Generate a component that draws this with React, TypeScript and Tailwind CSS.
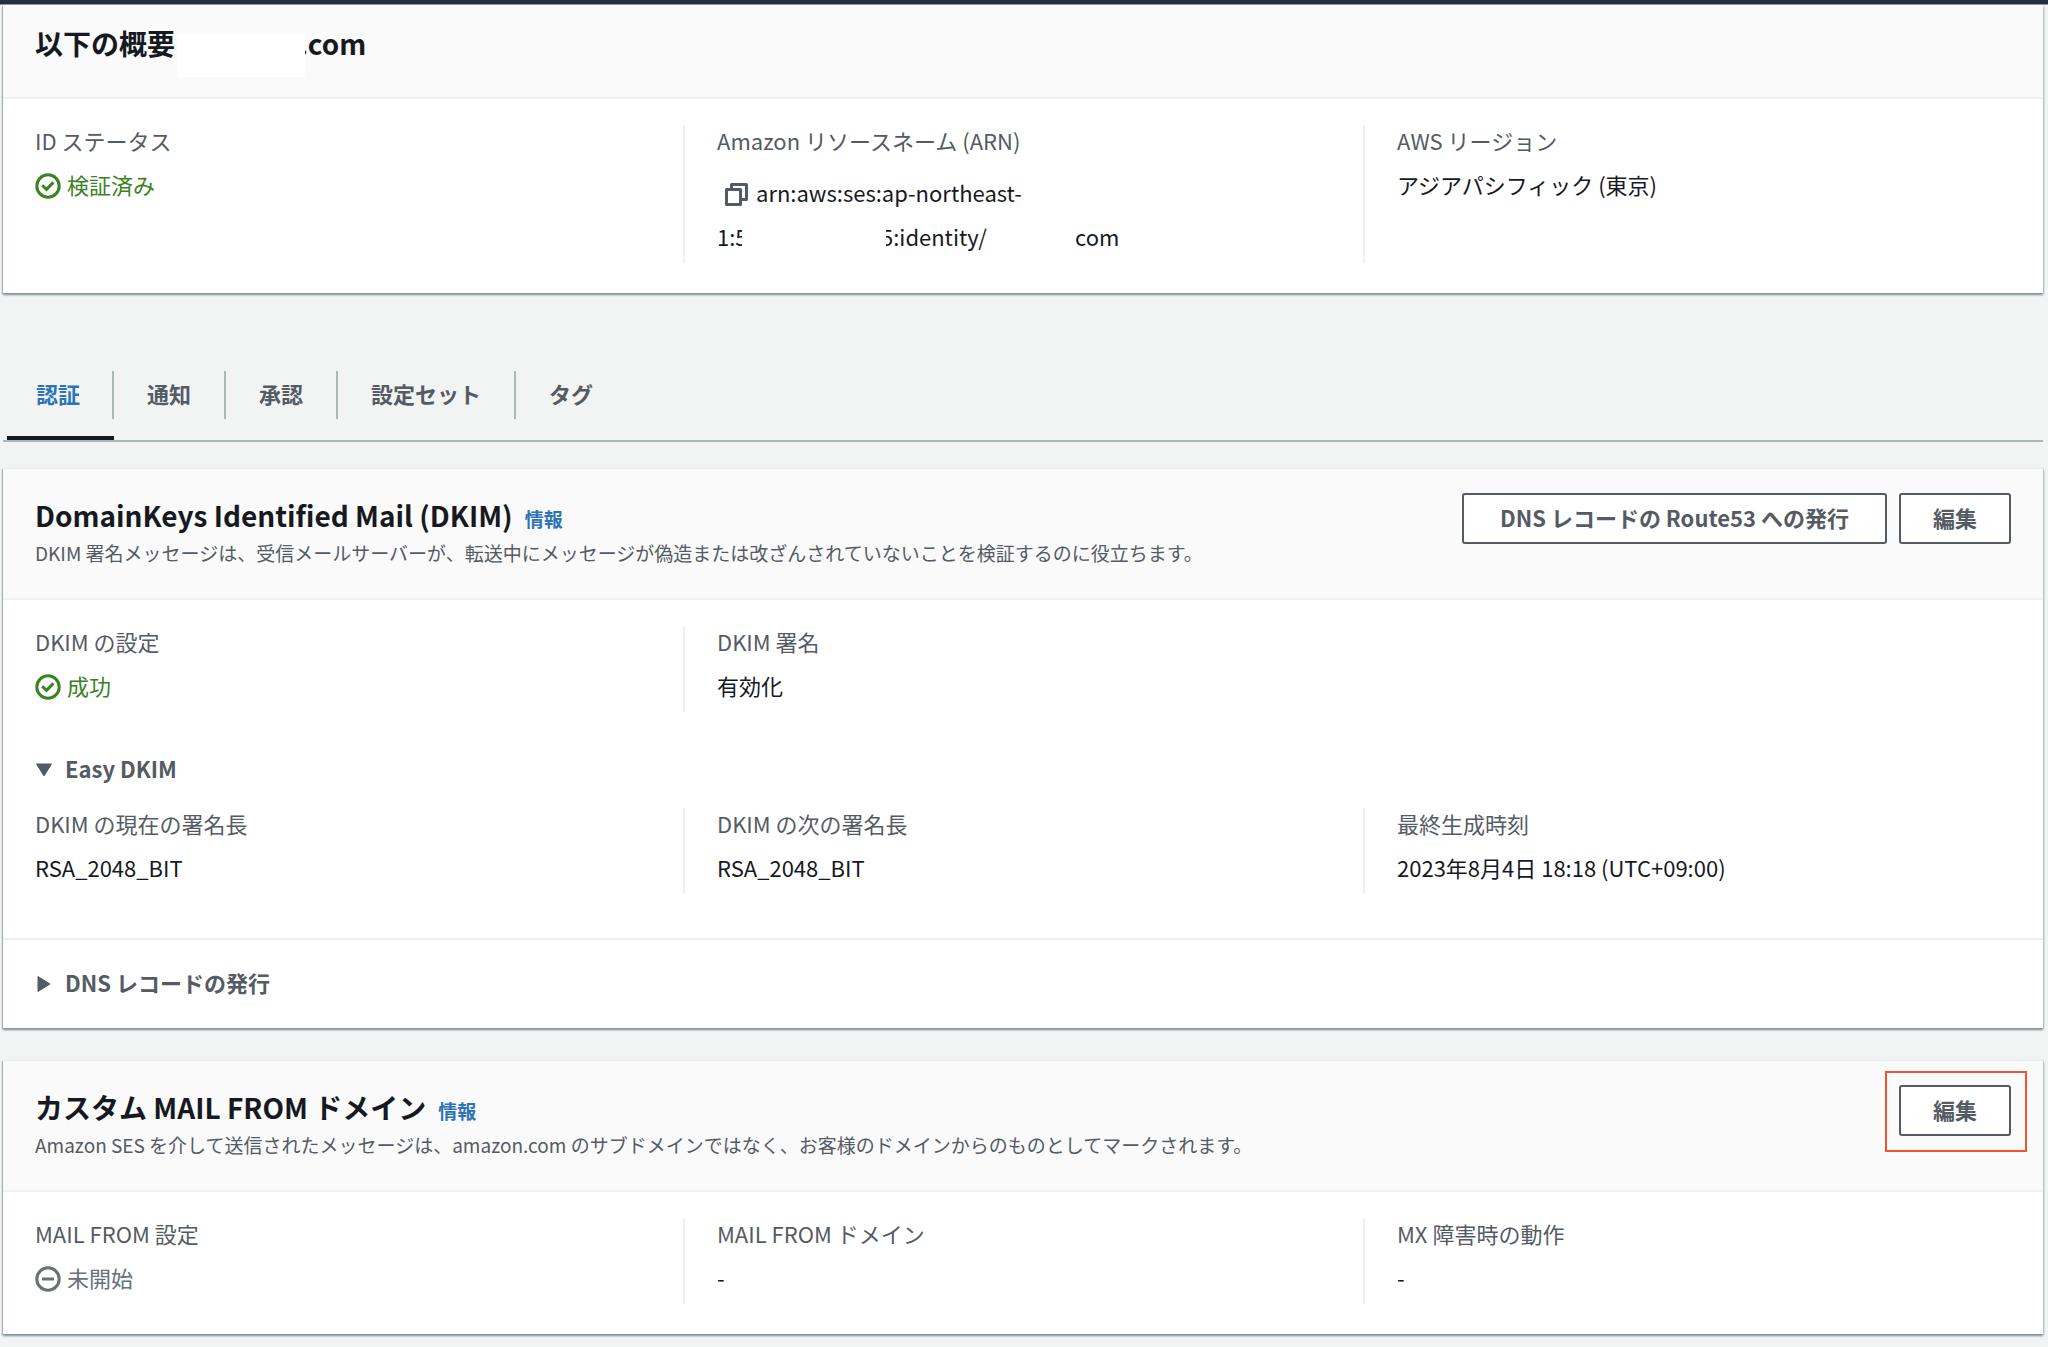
import type { ReactNode } from "react";

function Shell({ children }: { children: ReactNode }) {
  return (
    <section className="mr-[5px] ml-[3px] border-t border-[#eaeded] bg-white shadow-[0_2px_2px_#879196,-1px_1px_1px_#b4bdc0,1px_1px_2px_#c5cccf]">
      {children}
    </section>
  );
}

function Header({ title, description, actions }: { title: string; description: string; actions: ReactNode }) {
  return (
    <header className="flex items-start justify-between border-b-2 border-[#f0f1f1] bg-[#fafafa] px-8 pt-6 pb-[29px]">
      <div className="pt-0.5">
        <div className="flex items-baseline gap-3">
          <h2 className="text-[28px] leading-[40px] font-bold">{title}</h2>
          <a href="#info" className="text-[19px] leading-[32px] font-bold text-[#2e73b8]">
            情報
          </a>
        </div>
        <p className="mt-0.5 text-[19px] leading-[32px] text-[#545b64]">{description}</p>
      </div>
      <div className="flex gap-3">{actions}</div>
    </header>
  );
}

function Button({ wide, children }: { wide?: boolean; children: ReactNode }) {
  return (
    <button
      type="button"
      className={
        (wide ? "px-9" : "px-8") +
        " h-[51px] rounded-[3px] border-2 border-[#545b64] bg-white pb-1 text-[22px] leading-[32px] font-bold text-[#545b64]"
      }
    >
      {children}
    </button>
  );
}

function Columns({ children }: { children: ReactNode }) {
  return <dl className="grid grid-cols-3">{children}</dl>;
}

function Field({ label, first, children }: { label: string; first?: boolean; children: ReactNode }) {
  return (
    <div className={first ? "pl-8" : "border-l-2 border-[#eff1f1] pl-8"}>
      <dt className="text-[22px] leading-[30px] text-[#545b64]">{label}</dt>
      <dd className="pt-[7px] pb-[5px] text-[22px] leading-[44px]">{children}</dd>
    </div>
  );
}

function CheckStatus({ children }: { children: ReactNode }) {
  return (
    <span className="flex items-center gap-1.5 text-[#3a8222]">
      <svg className="mt-1" width="26" height="26" viewBox="0 0 26 26" fill="none" stroke="currentColor" strokeWidth="3">
        <circle cx="13" cy="13" r="11.2" />
        <path d="M7.2 12.2l4.300 4.200 6.900-7" />
      </svg>
      {children}
    </span>
  );
}

function PendingStatus({ children }: { children: ReactNode }) {
  return (
    <span className="flex items-center gap-1.5 text-[#687078]">
      <svg className="mt-1" width="26" height="26" viewBox="0 0 26 26" fill="none" stroke="currentColor" strokeWidth="3">
        <circle cx="13" cy="13" r="11.2" />
        <path d="M7 13h12" />
      </svg>
      {children}
    </span>
  );
}

function CopyIcon() {
  return (
    <svg width="23" height="23" viewBox="0 0 23 23" fill="none" stroke="#545b64" strokeWidth="3" strokeLinejoin="round">
      <path d="M1.5 6.5h14v15h-14z" />
      <path d="M6.5 6V1.5h15v15H16" />
    </svg>
  );
}

const tabs = ["認証", "通知", "承認", "設定セット", "タグ"];

export default function App() {
  return (
    <div className="min-h-screen overflow-hidden bg-[#f2f4f4] font-['Noto_Sans_CJK_JP',sans-serif] text-[#16191f]">
      <div className="h-[5px] border-b border-[#8a8f98] bg-[#232f3e]" />

      <section className="mr-[5px] ml-[3px] bg-white shadow-[0_2px_2px_#879196,-1px_1px_1px_#b4bdc0,1px_1px_2px_#c5cccf]">
        <header className="flex border-b-2 border-[#f0f1f1] bg-[#fafafa] px-8 pt-[18px] pb-[34px]">
          <h1 className="flex text-[28px] leading-[40px] font-bold">
            以下の概要
            <span className="relative mt-2.5 -mr-1.5 -mb-3.5 ml-0.5 w-[128px] bg-white" />
            .com
          </h1>
        </header>
        <div className="pt-[26px] pb-[30px]">
          <Columns>
            <Field first label="ID ステータス">
              <CheckStatus>検証済み</CheckStatus>
            </Field>
            <Field label="Amazon リソースネーム (ARN)">
              <div className="flex items-center gap-2 pt-2 pl-2">
                <button type="button" aria-label="コピー" className="mt-1">
                  <CopyIcon />
                </button>
                arn:aws:ses:ap-northeast-
              </div>
              <div className="flex">
                <span className="w-[25px] overflow-hidden">1:5</span>
                <span className="ml-[144px] flex w-[101px] justify-end overflow-hidden">5:identity/</span>
                <span className="ml-[88px]">com</span>
              </div>
            </Field>
            <Field label="AWS リージョン">アジアパシフィック (東京)</Field>
          </Columns>
        </div>
      </section>

      <nav className="mt-[78px] mr-[5px] ml-[3px] flex border-b-2 border-[#aab7b8] pl-1" role="tablist">
        {tabs.map((tab, i) => (
          <button
            key={tab}
            type="button"
            role="tab"
            aria-selected={i === 0}
            className={
              i === 0
                ? "border-b-4 border-[#16191f] text-[#2e73b8]"
                : "border-b-4 border-transparent text-[#545b64]"
            }
          >
            <span
              className={
                (i === 0 ? "pr-8 pl-[29px]" : "px-[33px]") +
                " mb-[17px] block pb-1 text-[22px] leading-[44px] font-bold" +
                (i < tabs.length - 1 ? " border-r-2 border-[#aab7b8]" : "")
              }
            >
              {tab}
            </span>
          </button>
        ))}
      </nav>

      <main className="flex flex-col gap-8 pt-[26px] pb-4">
        <Shell>
          <Header
            title="DomainKeys Identified Mail (DKIM)"
            description="DKIM 署名メッセージは、受信メールサーバーが、転送中にメッセージが偽造または改ざんされていないことを検証するのに役立ちます。"
            actions={
              <>
                <Button wide>DNS レコードの Route53 への発行</Button>
                <Button>編集</Button>
              </>
            }
          />
          <div className="pt-[26px] pb-[30px]">
            <Columns>
              <Field first label="DKIM の設定">
                <CheckStatus>成功</CheckStatus>
              </Field>
              <Field label="DKIM 署名">有効化</Field>
            </Columns>
            <button type="button" className="mt-10 flex items-center gap-3 px-8 text-[22px] leading-[32px] font-bold text-[#545b64]">
              <svg className="mt-1" width="18" height="14" viewBox="0 0 18 14" fill="currentColor" stroke="currentColor" strokeLinejoin="round">
                <path d="M1.5 1h15L9 13z" />
              </svg>
              Easy DKIM
            </button>
            <div className="pt-6 pb-3.5">
              <Columns>
                <Field first label="DKIM の現在の署名長">RSA_2048_BIT</Field>
                <Field label="DKIM の次の署名長">RSA_2048_BIT</Field>
                <Field label="最終生成時刻">2023年8月4日 18:18 (UTC+09:00)</Field>
              </Columns>
            </div>
          </div>
          <div className="border-t-2 border-[#eff1f1] px-8 pt-[26px] pb-[30px]">
            <button type="button" className="flex items-center gap-3 text-[22px] leading-[32px] font-bold text-[#545b64]">
              <svg className="mt-1" width="18" height="18" viewBox="0 0 18 18" fill="currentColor" stroke="currentColor" strokeLinejoin="round">
                <path d="M3 1.500v15L15 9z" />
              </svg>
              DNS レコードの発行
            </button>
          </div>
        </Shell>

        <Shell>
          <Header
            title="カスタム MAIL FROM ドメイン"
            description="Amazon SES を介して送信されたメッセージは、amazon.com のサブドメインではなく、お客様のドメインからのものとしてマークされます。"
            actions={
              <div className="relative">
                <Button>編集</Button>
                <div className="pointer-events-none absolute -top-3.5 -right-4 -bottom-4 -left-3.5 border-2 border-[#f4532f]" />
              </div>
            }
          />
          <div className="pt-[26px] pb-[30px]">
            <Columns>
              <Field first label="MAIL FROM 設定">
                <PendingStatus>未開始</PendingStatus>
              </Field>
              <Field label="MAIL FROM ドメイン">-</Field>
              <Field label="MX 障害時の動作">-</Field>
            </Columns>
          </div>
        </Shell>
      </main>
    </div>
  );
}
